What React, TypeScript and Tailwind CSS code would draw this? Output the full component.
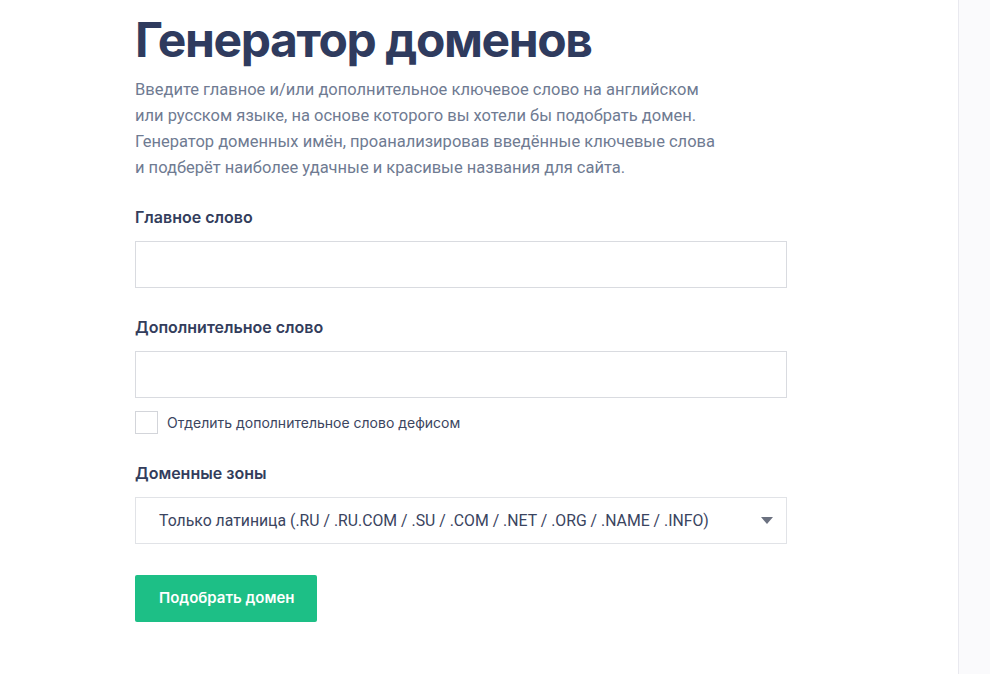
export default function App() {
  return (
    <div className="flex min-h-[674px] w-full bg-[#fafafc]">
      <div className="w-[959px] shrink-0 border-r border-[#e9e9ef] bg-white pb-12">
        <div className="ml-[135px] w-[652px] pt-[12px]">
          <h1 className="text-[48px] leading-[56px] font-bold tracking-[-1.4px] text-[#2f3b5e] [font-family:Inter,sans-serif]">
            Генератор доменов
          </h1>
          <p className="mt-[9px] text-[16.5px] leading-[26px] text-[#6f7b92] [font-family:Roboto,sans-serif]">
            Введите главное и/или дополнительное ключевое слово на английском
            <br />
            или русском языке, на основе которого вы хотели бы подобрать домен.
            <br />
            Генератор доменных имён, проанализировав введённые ключевые слова
            <br />
            и подберёт наиболее удачные и красивые названия для сайта.
          </p>

          <label className="mt-[26px] block text-[16px] leading-[20px] font-semibold text-[#333d5c] [font-family:Inter,sans-serif]">
            Главное слово
          </label>
          <input
            type="text"
            className="mt-[14px] block h-[47px] w-full border border-[#d9dbe0] bg-white px-6 outline-none"
          />

          <label className="mt-[29px] block text-[16px] leading-[20px] font-semibold text-[#333d5c] [font-family:Inter,sans-serif]">
            Дополнительное слово
          </label>
          <input
            type="text"
            className="mt-[14px] block h-[47px] w-full border border-[#d9dbe0] bg-white px-6 outline-none"
          />

          <label className="mt-[13px] flex items-center gap-[9px]">
            <span className="block h-[23px] w-[23px] border border-[#d3d5da] bg-white" />
            <span className="text-[14px] leading-[20px] text-[#3b4560] [font-family:Inter,sans-serif]">
              Отделить дополнительное слово дефисом
            </span>
          </label>

          <label className="mt-[29px] block text-[16px] leading-[20px] font-semibold text-[#333d5c] [font-family:Inter,sans-serif]">
            Доменные зоны
          </label>
          <div className="mt-[14px] flex h-[47px] w-full items-center justify-between border border-[#e1e3e7] bg-white pr-[12px] pl-[23px]">
            <span className="text-[15.8px] text-[#3a4460] [font-family:Roboto,sans-serif]">
              Только латиница (.RU / .RU.COM / .SU / .COM / .NET / .ORG / .NAME / .INFO)
            </span>
            <svg width="12" height="7" viewBox="0 0 12 7" className="mr-[1px]">
              <path d="M0 0h12L6 7z" fill="#6b7180" />
            </svg>
          </div>

          <button className="mt-[31px] flex h-[47px] w-[182px] items-center rounded-[2px] bg-[#1dbf86] pl-[24px] text-[15px] font-semibold text-white [font-family:Inter,sans-serif]">
            Подобрать домен
          </button>
        </div>
      </div>
      <div className="flex-1" />
    </div>
  )
}
